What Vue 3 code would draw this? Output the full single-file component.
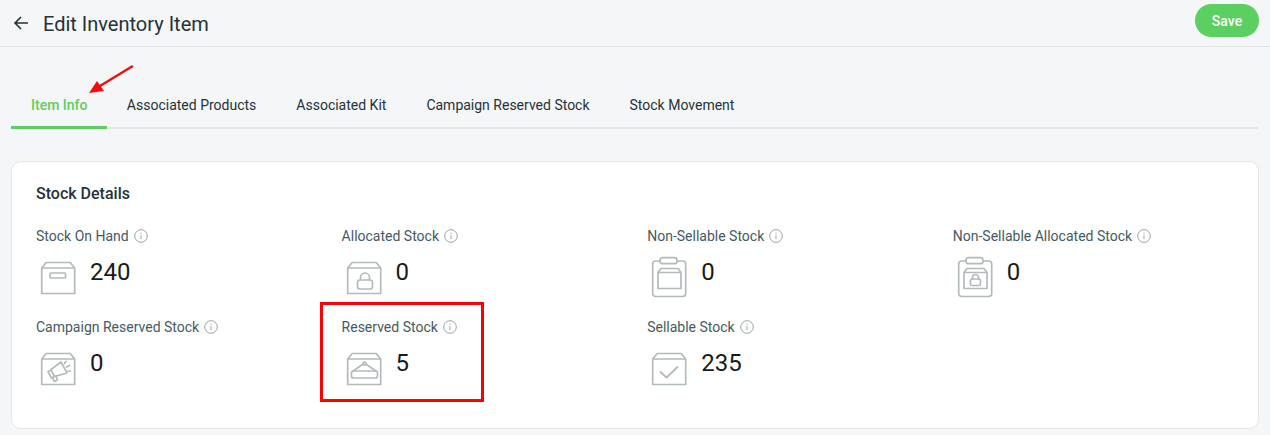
<script setup>
import { ref } from 'vue';

const tabs = ref(['Item Info', 'Associated Products', 'Associated Kit', 'Campaign Reserved Stock', 'Stock Movement']);
const activeTab = ref('Item Info');

const stocks = ref([
	{ label: 'Stock On Hand', value: 240, icon: 'box' },
	{ label: 'Allocated Stock', value: 0, icon: 'lock' },
	{ label: 'Non-Sellable Stock', value: 0, icon: 'clip' },
	{ label: 'Non-Sellable Allocated Stock', value: 0, icon: 'cliplock' },
	{ label: 'Campaign Reserved Stock', value: 0, icon: 'campaign' },
	{ label: 'Reserved Stock', value: 5, icon: 'reserved' },
	{ label: 'Sellable Stock', value: 235, icon: 'check' },
]);
</script>

<template>
	<div class="page">
		<header class="topbar">
			<svg class="back" width="16" height="16" viewBox="0 0 16 16" fill="none" stroke="#263238" stroke-width="1.6">
				<path d="M15 8H2M8 2L2 8l6 6" />
			</svg>
			<h1 class="title">Edit Inventory Item</h1>
			<button class="save">Save</button>
		</header>

		<nav class="tabs">
			<div v-for="tab in tabs" :key="tab" class="tab" :class="{ active: tab === activeTab }">{{ tab }}</div>
		</nav>

		<section class="card">
			<h2 class="card-title">Stock Details</h2>
			<div class="grid">
				<div v-for="item in stocks" :key="item.label" class="stock">
					<div class="label">
						{{ item.label }}
						<svg class="info" width="14" height="14" viewBox="0 0 14 14" fill="none" stroke="#9aa3a7">
							<circle cx="7" cy="7" r="6.3" />
							<path d="M7 6.2v4M7 3.6v1.2" />
						</svg>
					</div>
					<div class="value-row">
						<svg class="icon" width="44" height="44" viewBox="0 0 44 44" fill="none" stroke="#b4bbbd" stroke-width="1.7" stroke-linejoin="round" stroke-linecap="round">
							<template v-if="item.icon === 'clip' || item.icon === 'cliplock'">
								<rect x="5.7" y="6" width="33" height="35.5" rx="3" />
								<rect x="13" y="2.7" width="17" height="6" rx="2.5" fill="#fff" />
								<path d="M11 17.5l3-4h17l3 4v16H11z M11 17.5h23" />
								<template v-if="item.icon === 'cliplock'">
									<rect x="17.5" y="24" width="10" height="6.5" rx="1.5" />
									<path d="M19.5 24v-1.5a3 3 0 0 1 6 0V24" />
								</template>
							</template>
							<template v-else>
								<path d="M5.7 13l4.5-5.5h24L38.7 13v25.5h-33z M5.7 13h33" />
								<rect v-if="item.icon === 'box'" x="14" y="18" width="15.500" height="5" rx="1" />
								<template v-if="item.icon === 'lock'">
									<rect x="15.500" y="25" width="15" height="9" rx="2.500" />
									<path d="M18.500 25v-2.500a4.500 4.500 0 0 1 9 0V25" />
								</template>
								<template v-if="item.icon === 'campaign'">
									<path d="M12 25.500l3.500 6.500 3-1.500-3.500-6.500z M15 23.500L25 16l6 11-12.500 3.500" />
									<path d="M16.500 32l2 3.500 3-1.500-1.500-4M28.500 17.500l1.500-2M30.500 21l3-1.500M32 25h2.500" />
								</template>
								<template v-if="item.icon === 'reserved'">
									<rect x="9.500" y="25" width="26" height="7" rx="2" />
									<path d="M11 25l9.500-6.500h4L34 25" />
									<circle cx="22.500" cy="17.500" r="1.500" />
								</template>
								<path v-if="item.icon === 'check'" d="M13.500 26l6 5.500 11-10.500" stroke-width="1.800" />
							</template>
						</svg>
						<span class="value">{{ item.value }}</span>
					</div>
				</div>
			</div>
		</section>

		<!-- annotations on top of the screenshot -->
		<svg class="arrow" width="50" height="32" viewBox="0 0 50 32">
			<path d="M44 1.500L12 21" stroke="#f00e0e" stroke-width="2.500" stroke-linecap="round" />
			<path d="M1 28l8-12 7 10z" fill="#f00e0e" />
		</svg>
		<div class="red-box"></div>
	</div>
</template>

<style>
html,
body {
	background: #f4f6f8;
}
</style>

<style scoped>
* {
	box-sizing: border-box;
}
.page {
	position: relative;
	width: 1270px;
	height: 435px;
	overflow: hidden;
	background: #f4f6f8;
	font-family: Roboto, "Liberation Sans", sans-serif;
	color: #263238;
}
.topbar {
	display: flex;
	align-items: center;
	height: 47px;
	padding: 0 11px 5px 13px;
	border-bottom: 1px solid #e3e5e7;
}
.back {
	margin: 5px 14px 0 0;
}
.title {
	margin: 6px 0 0;
	font-size: 20px;
	font-weight: 400;
}
.save {
	margin-left: auto;
	margin-top: 0;
	width: 64px;
	height: 33px;
	border: 0;
	border-radius: 17px;
	background: #5bcf5f;
	color: #fff;
	font-family: inherit;
	font-size: 14px;
	font-weight: 500;
}
.tabs {
	display: flex;
	margin: 44px 12px 0 11px;
	height: 38px;
	border-bottom: 2px solid #e4e6e8;
}
.tab {
	padding: 0 20px;
	height: 38px;
	line-height: 28px;
	font-size: 14px;
}
.tab.active {
	color: #5bcf5f;
	font-weight: 500;
	padding-right: 19.4px;
	border-bottom: 3px solid #5bcf5f;
}
.card {
	margin: 32px 11px 0;
	height: 268px;
	padding: 22px 24px 0;
	background: #fff;
	border: 1px solid #e4e6e8;
	border-radius: 10px;
}
.card-title {
	margin: 0 0 22px;
	height: 20px;
	line-height: 20px;
	font-size: 16px;
	font-weight: 500;
}
.grid {
	display: grid;
	grid-template-columns: repeat(4, 305.6px);
	grid-auto-rows: 91px;
}
.label {
	display: flex;
	align-items: center;
	gap: 5px;
	height: 20px;
	font-size: 14px;
	color: #455a64;
}
.value-row {
	display: flex;
	margin-top: 9px;
}
.icon {
	margin-right: 10px;
}
.value {
	font-size: 24px;
	line-height: 34px;
	color: #1a1a1a;
}
.arrow {
	position: absolute;
	left: 88px;
	top: 65px;
}
.red-box {
	position: absolute;
	left: 320px;
	top: 302px;
	width: 164px;
	height: 100px;
	border: 3px solid #f00;
}
</style>
